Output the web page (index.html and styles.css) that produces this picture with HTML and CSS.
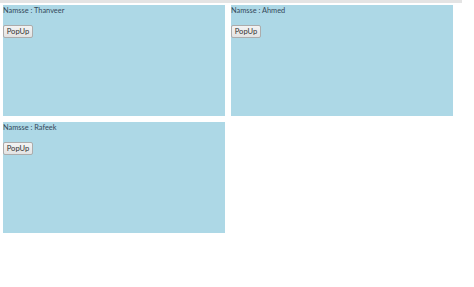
FILE: index.html
```html
<!DOCTYPE html>
<html>
<head>
<meta charset="utf-8">
<link rel="stylesheet" href="styles.css">
</head>
<body>
<div class="topbar"></div>
<div class="list">
  <div class="card">
    <div class="name">Namsse : Thanveer</div>
    <button class="btn">PopUp</button>
  </div>
  <div class="card">
    <div class="name">Namsse : Ahmed</div>
    <button class="btn">PopUp</button>
  </div>
  <div class="card">
    <div class="name">Namsse : Rafeek</div>
    <button class="btn">PopUp</button>
  </div>
</div>
</body>
</html>
```

FILE: styles.css
```css
html, body {
  margin: 0;
  padding: 0;
  background: #ffffff;
}
body {
  font-family: Lato, "Open Sans", sans-serif;
  width: 474px;
  height: 287px;
  overflow: hidden;
}
.topbar {
  height: 3px;
  width: 462px;
  background: #e4e4e4;
}
.list {
  display: flex;
  flex-wrap: wrap;
  gap: 6px;
  padding: 2px 3px 0 3px;
}
.card {
  width: 222px;
  height: 111px;
  background: #add8e6;
  display: flex;
  flex-direction: column;
  align-items: flex-start;
  box-sizing: border-box;
  padding-top: 1px;
}
.name {
  font-size: 7.4px;
  line-height: 10px;
  color: #34495a;
  height: 19px;
}
.btn {
  font-family: Lato, "Open Sans", sans-serif;
  font-size: 7.6px;
  color: #333333;
  height: 13px;
  width: 30px;
  padding: 0;
  margin: 0;
  border: 1px solid #acacac;
  border-radius: 2px;
  background: linear-gradient(#f3f3f3, #e3e3e3);
  line-height: 11px;
}
```
